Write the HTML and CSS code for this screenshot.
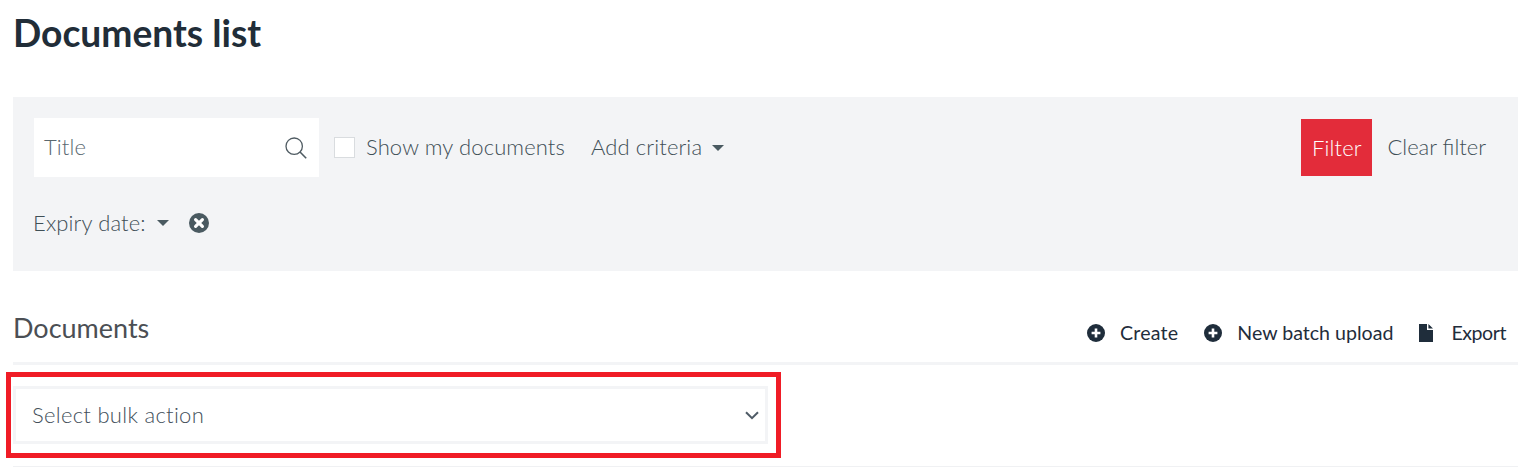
FILE: index.html
```html
<!DOCTYPE html>
<html lang="en">
<head>
<meta charset="utf-8">
<title>Documents list</title>
<link rel="stylesheet" href="styles.css">
</head>
<body>
<main class="page">
  <h1 class="title">Documents list</h1>
  <section class="filters">
    <div class="filter-row">
      <div class="search">
        <span class="placeholder">Title</span>
        <svg class="search-icon" viewBox="0 0 22 22" width="22" height="22"><circle cx="9.2" cy="9.2" r="8.2" fill="none" stroke="#4f5b62" stroke-width="1.3"/><path d="M15 15l6.2 6.2" fill="none" stroke="#4f5b62" stroke-width="1.6"/></svg>
      </div>
      <label class="check"><span class="box"></span><span class="label-text">Show my documents</span></label>
      <span class="criteria"><span class="label-text">Add criteria</span><span class="caret"></span></span>
      <span class="spacer"></span>
      <button class="filter-btn"><span class="label-text">Filter</span></button>
      <span class="clear label-text">Clear filter</span>
    </div>
    <div class="expiry">
      <span class="label-text">Expiry date:</span><span class="caret caret-small"></span>
      <svg class="remove" viewBox="0 0 20 20" width="20" height="20"><circle cx="10" cy="10" r="10" fill="#4a5a61"/><path d="M6.6 6.6l6.8 6.8M13.4 6.6l-6.8 6.8" stroke="#fff" stroke-width="3.2" stroke-linecap="round"/></svg>
    </div>
  </section>
  <header class="docs-head">
    <h2 class="docs-title">Documents</h2>
    <nav class="actions">
      <a class="action action-create"><svg viewBox="0 0 18 18" width="18" height="18"><circle cx="9" cy="9" r="9" fill="#1f2d3b"/><path d="M9 4.6v8.8M4.6 9h8.8" stroke="#fff" stroke-width="2.6"/></svg>Create</a>
      <a class="action"><svg viewBox="0 0 18 18" width="18" height="18"><circle cx="9" cy="9" r="9" fill="#1f2d3b"/><path d="M9 4.6v8.8M4.6 9h8.8" stroke="#fff" stroke-width="2.6"/></svg>New batch upload</a>
      <a class="action action-export"><svg viewBox="0 0 14 18" width="14" height="18"><path d="M0 0h8v6h6v12H0z M9.4 0L14 4.6H9.4z" fill="#1f2d3b"/></svg><span class="export-text">Export</span></a>
    </nav>
  </header>
  <div class="highlight">
    <div class="bulk">
      <span class="bulk-text">Select bulk action</span>
      <svg viewBox="0 0 14 9" width="14" height="9"><path d="M1 1.2l6 6 6-6" fill="none" stroke="#4f5b66" stroke-width="2"/></svg>
    </div>
  </div>
  <div class="foot-line"></div>
</main>
</body>
</html>
```
FILE: styles.css
```css
* { box-sizing: border-box; }
html, body { margin: 0; padding: 0; background: #fff; }
body { font-family: "Lato", "Open Sans", sans-serif; overflow: hidden; height: 475px; }
.page { width: 1518px; padding-left: 13px; }
.title { margin: 0; height: 97px; padding-top: 11px; font-size: 37.2px; line-height: 44px; font-weight: 700; color: #212d38; }
.filters { background: #f3f4f6; height: 174px; padding: 21px 32px 0 21px; color: #3f4f56; font-size: 22px; font-weight: 300; letter-spacing: .12px; }
.filter-row { display: flex; align-items: center; height: 59px; }
.label-text, .placeholder { padding-bottom: 2px; }
.search { width: 285px; height: 59px; background: #fff; display: flex; align-items: center; justify-content: space-between; padding: 0 12px 0 10px; }
.placeholder { color: #5a686f; }
.check { display: flex; align-items: center; margin-left: 15px; }
.box { width: 21px; height: 21px; background: #fff; border: 1px solid #d9dcdf; margin-right: 11px; }
.criteria { margin-left: 26px; display: flex; align-items: center; }
.caret { display: inline-block; width: 0; height: 0; border-left: 6.5px solid transparent; border-right: 6.5px solid transparent; border-top: 6.5px solid #4a5a61; margin-left: 10px; }
.spacer { flex: 1; }
.filter-btn { width: 71px; height: 57px; border: 0; background: #e32c3a; color: #fff; font: inherit; letter-spacing: inherit; padding: 0; }
.clear { margin-left: 15px; letter-spacing: 0; }
.expiry { display: flex; align-items: center; margin-top: 26px; height: 40px; margin-left: -1px; }
.caret-small { margin-left: 11px; }
.remove { margin-left: 20px; }
.docs-head { display: flex; justify-content: space-between; align-items: flex-start; height: 94px; border-bottom: 3px solid #f3f4f6; }
.docs-title { margin: 40px 0 0; font-size: 27px; line-height: 34px; font-weight: 400; color: #4b4f54; }
.actions { display: flex; margin-top: 49px; padding-right: 12px; font-size: 19.6px; line-height: 26px; color: #1f2d3b; }
.action { display: flex; align-items: center; margin-left: 26px; }
.action svg { margin-right: 15px; }
.action-create { letter-spacing: .2px; }
.action-export svg { margin-right: 18px; }
.export-text { letter-spacing: -.45px; }
.highlight { width: 775px; height: 86px; margin: 7px 0 0 -7px; border: 5px solid #f01c26; padding: 9px 8px 0 2px; }
.bulk { height: 58px; border: 3px solid #f3f4f6; display: flex; align-items: center; justify-content: space-between; padding: 0 6px 0 16px; font-size: 22px; font-weight: 300; letter-spacing: .3px; color: #434f5a; }
.bulk-text { padding-bottom: 1px; }
.foot-line { height: 1px; margin-top: 8px; background: #f0f1f3; }
```
